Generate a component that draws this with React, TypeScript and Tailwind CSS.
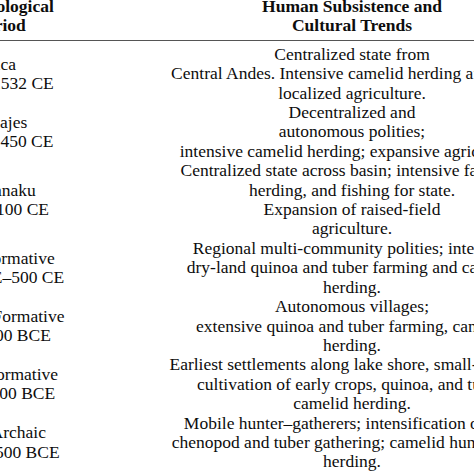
const rows: { period: string[]; trends: string[] }[] = [
  {
    period: ["Inca", "1400–1532 CE"],
    trends: [
      "Centralized state from",
      "Central Andes. Intensive camelid herding and",
      "localized agriculture.",
    ],
  },
  {
    period: ["Pacajes", "1100–1450 CE"],
    trends: [
      "Decentralized and",
      "autonomous polities;",
      "intensive camelid herding; expansive agriculture.",
    ],
  },
  {
    period: ["Tiwanaku", "500–1100 CE"],
    trends: [
      "Centralized state across basin; intensive farming,",
      "herding, and fishing for state.",
      "Expansion of raised-field",
      "agriculture.",
    ],
  },
  {
    period: ["Late Formative", "500 BCE–500 CE"],
    trends: [
      "Regional multi-community polities; intensive",
      "dry-land quinoa and tuber farming and camelid",
      "herding.",
    ],
  },
  {
    period: ["Middle Formative", "800–500 BCE"],
    trends: [
      "Autonomous villages;",
      "extensive quinoa and tuber farming, camelid",
      "herding.",
    ],
  },
  {
    period: ["Early Formative", "1500–800 BCE"],
    trends: [
      "Earliest settlements along lake shore, small-scale",
      "cultivation of early crops, quinoa, and tuber,",
      "camelid herding.",
    ],
  },
  {
    period: ["Late Archaic", "3000–1500 BCE"],
    trends: [
      "Mobile hunter–gatherers; intensification of wild",
      "chenopod and tuber gathering; camelid hunting and",
      "herding.",
    ],
  },
];

// lines that run past the crop and sit a little further left in the source
const nudge: Record<string, string> = {
  "Central Andes. Intensive camelid herding and": "pr-[42px]",
  "Earliest settlements along lake shore, small-scale": "pr-[22px]",
};

export default function App() {
  return (
    <div
      className="w-[474px] h-[474px] overflow-hidden bg-white text-[#0d0d0d] text-[17.5px] leading-[19.4px]"
      style={{ fontFamily: '"Liberation Serif", "Times New Roman", serif' }}
    >
      <div className="ml-[-74px] w-[616px] -mt-[3px]">
        {/* header */}
        <div className="grid grid-cols-[150px_86px_380px] pb-[4px] border-b border-[#555] font-bold">
          <div className="text-center whitespace-nowrap">
            <div>Chronological</div>
            <div>Period</div>
          </div>
          <div />
          <div className="text-center whitespace-nowrap">
            <div>Human Subsistence and</div>
            <div>Cultural Trends</div>
          </div>
        </div>
        {/* body */}
        <div className="pt-[4px]">
          {rows.map((r) => (
            <div key={r.period[0]} className="grid grid-cols-[150px_86px_380px]">
              <div className="self-center text-center whitespace-nowrap">
                {r.period.map((p) => (
                  <div key={p}>{p}</div>
                ))}
              </div>
              <div />
              <div className="text-center whitespace-nowrap">
                {r.trends.map((t) => (
                  <div key={t} className={nudge[t] ?? ""}>
                    {t}
                  </div>
                ))}
              </div>
            </div>
          ))}
        </div>
      </div>
    </div>
  );
}
